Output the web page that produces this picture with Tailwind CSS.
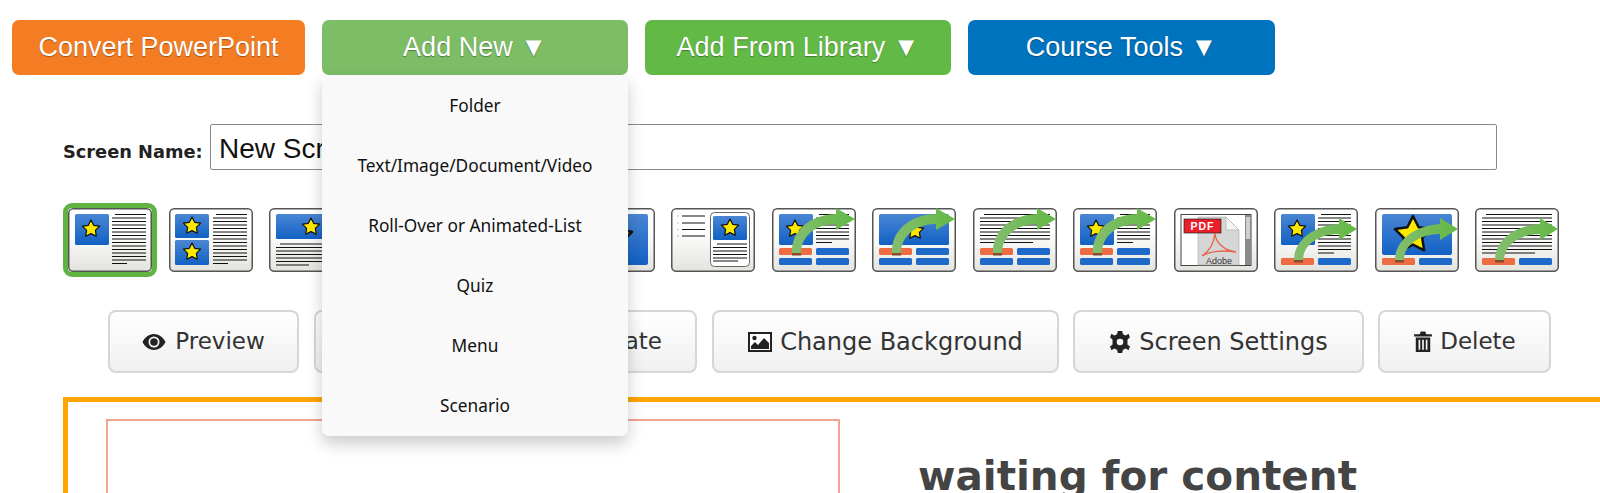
<!DOCTYPE html>
<html lang="en">
<head>
  <meta charset="UTF-8" />
  <title>Course Screen Editor</title>
  <script src="https://cdn.jsdelivr.net/npm/@tailwindcss/browser@4"></script>
</head>
<body class="relative h-[493px] w-[1600px] overflow-hidden bg-white font-['Liberation_Sans',sans-serif]">

  <!-- Shared thumbnail parts -->
  <svg class="absolute h-0 w-0" width="0" height="0">
    <defs>
      <linearGradient id="thumbBg" x1="0" y1="0" x2="0" y2="1"><stop offset="0.35" stop-color="#ffffff"/><stop offset="1" stop-color="#e3e3de"/></linearGradient>
      <linearGradient id="blueBg" x1="0" y1="0" x2="0" y2="1"><stop offset="0" stop-color="#4a86d4"/><stop offset="1" stop-color="#1161c4"/></linearGradient>
      <linearGradient id="arrowBg" x1="0" y1="0" x2="1" y2="0"><stop offset="0" stop-color="#84bd70"/><stop offset="1" stop-color="#62b944"/></linearGradient>
      <symbol id="base" viewBox="0 0 84 64"><rect x="0.75" y="0.75" width="82.5" height="62.5" rx="4.5" fill="url(#thumbBg)" stroke="#555" stroke-width="1.5"/></symbol>
      <symbol id="star" viewBox="-10 -10 20 20"><path d="M0-9 2.700-3.700 8.600-2.800 4.400 1.400 5.300 7.300 0 4.600-5.300 7.300-4.400 1.400-8.600-2.800-2.700-3.700Z" fill="#fde800" stroke="#111" stroke-width="1.200" stroke-linejoin="round"/></symbol>
      <symbol id="arrowTall" viewBox="0 0 84 64"><path d="M20 45C19 24 36 7 64 6V0L83 11 64 22V16C44 16 29 28 29 45Z" fill="url(#arrowBg)"/><path d="M20 45h9v2.500h-9z" fill="#8a4a2c"/></symbol>
      <symbol id="arrowLow" viewBox="0 0 84 64"><path d="M20 52C20 34 37 18 65 16V10L83 21 65 32V26C45 26 29 37 29 52Z" fill="url(#arrowBg)"/><path d="M20 52h9v2.500h-9z" fill="#8a4a2c"/></symbol>
      <symbol id="pillsTwoRows" viewBox="0 0 84 64"><rect x="7" y="40" width="33" height="7" rx="1.500" fill="#ee6c42"/><rect x="44" y="40" width="33" height="7" rx="1.500" fill="#1f69c9"/><rect x="7" y="50" width="33" height="7" rx="1.500" fill="#1f69c9"/><rect x="44" y="50" width="33" height="7" rx="1.500" fill="#1f69c9"/></symbol>
      <symbol id="pillsOneRow" viewBox="0 0 84 64"><rect x="7" y="50" width="33" height="7" rx="1.500" fill="#ee6c42"/><rect x="44" y="50" width="33" height="7" rx="1.500" fill="#1f69c9"/></symbol>
      <symbol id="linesRight" viewBox="0 0 84 64"><path d="M47 6.500H78M44 10H78M44 13.500H78M44 17H78M44 20.500H78M44 24H78M44 27.500H78M44 31H78M44 34.500H78M44 38H78M44 41.500H78M44 45H78M44 48.500H78M44 52H78M44 55.500H59" stroke="#111" stroke-width="1.200"/></symbol>
      <symbol id="linesRightShort" viewBox="0 0 84 64"><path d="M47 6.500H77M44 10H77M44 13.500H77M44 17H77M44 20.500H77M44 24H77M44 27.500H77M44 31H77M44 34.500H60" stroke="#111" stroke-width="1.200"/></symbol>
      <symbol id="linesRightMid" viewBox="0 0 84 64"><path d="M47 6.500H77M44 10H77M44 13.500H77M44 17H77M44 20.500H77M44 24H77M44 27.500H77M44 31H77M44 34.500H77M44 38H77M44 41.500H77M44 45H60" stroke="#111" stroke-width="1.200"/></symbol>
      <symbol id="linesWideShort" viewBox="0 0 84 64"><path d="M11 6.500H77M7 10H77M7 13.500H77M7 17H77M7 20.500H77M7 24H77M7 27.500H77M7 31H77M7 34.500H60" stroke="#111" stroke-width="1.200"/></symbol>
      <symbol id="linesWideMid" viewBox="0 0 84 64"><path d="M11 6.500H77M7 10H77M7 13.500H77M7 17H77M7 20.500H77M7 24H77M7 27.500H77M7 31H77M7 34.500H77M7 38H77M7 41.500H77M7 45H60" stroke="#111" stroke-width="1.200"/></symbol>
    </defs>
  </svg>

  <!-- Top toolbar -->
  <div class="flex gap-[17px] pl-[12px] pt-[20px]">
    <button class="h-[55px] w-[293px] rounded-[7px] bg-[#f47d24] text-[27px] text-white [text-shadow:0_1px_1px_rgba(0,0,0,.35)]">Convert PowerPoint</button>
    <div class="relative">
      <button class="h-[55px] w-[306px] rounded-[7px] bg-[#7dbd66] text-[27px] text-white [text-shadow:0_1px_1px_rgba(0,0,0,.35)]">Add New ▼</button>
      <!-- Add New dropdown -->
      <div class="absolute left-0 top-[55px] z-10 flex w-[306px] flex-col rounded-b-[7px] bg-[#f9f9f9] pt-[1px] text-center font-['Noto_Sans',sans-serif] text-[17.300px] text-[#111] shadow-[0_8px_16px_rgba(0,0,0,0.2)]">
        <a class="flex h-[60px] items-center justify-center">Folder</a>
        <a class="flex h-[60px] items-center justify-center">Text/Image/Document/Video</a>
        <a class="flex h-[60px] items-center justify-center">Roll-Over or Animated-List</a>
        <a class="flex h-[60px] items-center justify-center">Quiz</a>
        <a class="flex h-[60px] items-center justify-center">Menu</a>
        <a class="flex h-[60px] items-center justify-center">Scenario</a>
      </div>
    </div>
    <button class="h-[55px] w-[306px] rounded-[7px] bg-[#63b946] text-[27px] text-white [text-shadow:0_1px_1px_rgba(0,0,0,.35)]">Add From Library ▼</button>
    <button class="h-[55px] w-[307px] rounded-[7px] bg-[#0073bf] text-[27px] text-white [text-shadow:0_1px_1px_rgba(0,0,0,.35)]">Course Tools ▼</button>
  </div>

  <!-- Screen name -->
  <div class="mt-[49px] flex items-center pl-[63px]">
    <label class="w-[147px] pt-[11px] font-['DejaVu_Sans',sans-serif] text-[17.800px] font-bold text-[#222]">Screen Name:</label>
    <input type="text" value="New Screen" class="h-[46px] w-[1287px] rounded-[2px] border border-[#8a8a8a] px-[8px] pt-[3px] text-[28px] text-[#111]" />
  </div>

  <!-- Layout thumbnails -->
  <div class="mt-[38px] flex h-[64px] gap-[16.500px] pl-[68px]">
    <div class="relative h-[64px] w-[84px]">
      <div class="absolute -inset-x-[5px] -inset-y-[5px] rounded-[9px] border-[5px] border-[#5fb441]"></div>
      <svg width="84" height="64" viewBox="0 0 84 64"><use href="#base"/><rect x="7" y="6" width="34" height="31" rx="1.500" fill="url(#blueBg)"/><use href="#star" x="13" y="11" width="20" height="20"/><use href="#linesRight"/></svg>
    </div>
    <svg width="84" height="64" viewBox="0 0 84 64"><use href="#base"/><rect x="6" y="6" width="34" height="24" rx="1.500" fill="url(#blueBg)"/><rect x="6" y="32" width="34" height="25" rx="1.500" fill="url(#blueBg)"/><use href="#star" x="13" y="8" width="20" height="20"/><use href="#star" x="13" y="34" width="20" height="20"/><use href="#linesRight"/></svg>
    <svg width="84" height="64" viewBox="0 0 84 64"><use href="#base"/><rect x="7" y="6" width="70" height="25" rx="1.500" fill="url(#blueBg)"/><use href="#star" x="32" y="9" width="20" height="20"/><path d="M11 36H77M7 39.500H77M7 43H77M7 46.500H77M7 50H77M7 53.500H77M7 57H40" stroke="#111" stroke-width="1.200"/></svg>
    <svg width="84" height="64" viewBox="0 0 84 64"><use href="#base"/><path d="M11 6.500H77M7 10H77M7 13.500H77M7 17H77M7 20.500H77M7 24H77" stroke="#111" stroke-width="1.200"/><rect x="7" y="28" width="70" height="29" rx="1.500" fill="url(#blueBg)"/><use href="#star" x="32" y="32" width="20" height="20"/></svg>
    <svg width="84" height="64" viewBox="0 0 84 64"><use href="#base"/><use href="#linesWideMid"/><path d="M7 48.500H77M7 52H77M7 55.500H50" stroke="#111" stroke-width="1.200"/></svg>
    <svg width="84" height="64" viewBox="0 0 84 64"><use href="#base"/><rect x="7" y="6" width="70" height="51" rx="2" fill="url(#blueBg)"/><use href="#star" x="20" y="8" width="44" height="44"/></svg>
    <svg width="84" height="64" viewBox="0 0 84 64"><use href="#base"/><path d="M11 8H34M11 15H34M11 21.500H34M11 28H34" stroke="#111" stroke-width="1"/><path d="M6.500 8h1M6.500 15h1M6.500 21.500h1M6.500 28h1" stroke="#ee5a30" stroke-width="1"/><rect x="39.500" y="4.500" width="39" height="54" rx="4" fill="#fff" stroke="#666" stroke-width="1"/><rect x="42" y="8" width="34" height="24" rx="1.500" fill="url(#blueBg)"/><use href="#star" x="49" y="10" width="20" height="20"/><path d="M46 36H76M42 39.500H76M42 43H76M42 46.500H76M42 50H76M42 53H67" stroke="#111" stroke-width="1.200"/></svg>
    <svg width="84" height="64" viewBox="0 0 84 64"><use href="#base"/><rect x="7" y="6" width="34" height="31" rx="1.500" fill="url(#blueBg)"/><use href="#star" x="13" y="11" width="20" height="20"/><use href="#linesRightShort"/><use href="#pillsTwoRows"/><use href="#arrowTall"/></svg>
    <svg width="84" height="64" viewBox="0 0 84 64"><use href="#base"/><rect x="7" y="6" width="70" height="31" rx="1.500" fill="url(#blueBg)"/><use href="#star" x="33" y="13" width="20" height="20"/><use href="#pillsTwoRows"/><use href="#arrowTall"/></svg>
    <svg width="84" height="64" viewBox="0 0 84 64"><use href="#base"/><use href="#linesWideShort"/><use href="#pillsTwoRows"/><use href="#arrowTall"/></svg>
    <svg width="84" height="64" viewBox="0 0 84 64"><use href="#base"/><rect x="7" y="6" width="34" height="31" rx="1.500" fill="url(#blueBg)"/><use href="#star" x="13" y="11" width="20" height="20"/><use href="#linesRightShort"/><use href="#pillsTwoRows"/><use href="#arrowTall"/></svg>
    <!-- PDF layout -->
    <svg width="84" height="64" viewBox="0 0 84 64"><use href="#base"/><rect x="7" y="6.500" width="70" height="51" fill="#fff" stroke="#444" stroke-width="1"/><rect x="71" y="7" width="6" height="50" fill="#8a8a8a"/><rect x="72" y="9" width="4" height="22" fill="#cfcfcf"/><path d="M24 9H52L65 22V57H24Z" fill="#d6d6d6" stroke="#aaa" stroke-width=".6"/><path d="M52 9V22H65Z" fill="#f4f4f4" stroke="#aaa" stroke-width=".6"/><rect x="10" y="11" width="37" height="14" fill="#e9202a" stroke="#222" stroke-width=".7"/><text x="28.500" y="22" text-anchor="middle" font-family="Liberation Sans" font-weight="700" font-size="10.500" letter-spacing="1" fill="#fff">PDF</text><path d="M28 48C34 44 40 36 41 25 41 33 48 42 62 44 50 42 36 43 28 48Z" fill="none" stroke="#ea5f45" stroke-width="1.300"/><text x="45" y="56" text-anchor="middle" font-family="Liberation Sans" font-size="9" fill="#333">Adobe</text></svg>
    <svg width="84" height="64" viewBox="0 0 84 64"><use href="#base"/><rect x="7" y="6" width="34" height="31" rx="1.500" fill="url(#blueBg)"/><use href="#star" x="13" y="11" width="20" height="20"/><use href="#linesRightMid"/><use href="#pillsOneRow"/><use href="#arrowLow"/></svg>
    <svg width="84" height="64" viewBox="0 0 84 64"><use href="#base"/><rect x="7" y="6" width="70" height="41" rx="2" fill="url(#blueBg)"/><use href="#star" x="17" y="6" width="42" height="42"/><use href="#pillsOneRow"/><use href="#arrowLow"/></svg>
    <svg width="84" height="64" viewBox="0 0 84 64"><use href="#base"/><use href="#linesWideMid"/><use href="#pillsOneRow"/><use href="#arrowLow"/></svg>
  </div>

  <!-- Screen actions -->
  <div class="mt-[38px] flex h-[63px] pl-[108px] font-['DejaVu_Sans',sans-serif] text-[23px] text-[#333]">
    <button class="flex w-[191px] items-center justify-center gap-[9px] rounded-[8px] border-2 border-[#d6d6d6] bg-gradient-to-b from-white to-[#f0f0f0]">
      <svg width="24" height="18" viewBox="0 0 24 18"><path d="M12 1C6.500 1 2.500 5 .5 9 2.500 13 6.500 17 12 17S21.500 13 23.500 9C21.500 5 17.500 1 12 1ZM12 14.500A5.500 5.500 0 1 1 12 3.500 5.500 5.500 0 0 1 12 14.500Z" fill="#222"/><circle cx="12" cy="9" r="3.800" fill="#222"/></svg>Preview</button>
    <button class="ml-[15px] flex w-[383px] items-center justify-end rounded-[8px] border-2 border-[#d6d6d6] bg-gradient-to-b from-white to-[#f0f0f0] pr-[33px]">Save as Template</button>
    <button class="ml-[15px] flex w-[347px] items-center justify-center gap-[8px] rounded-[8px] border-2 border-[#d6d6d6] bg-gradient-to-b from-white to-[#f0f0f0] text-[24px]">
      <svg width="24" height="20" viewBox="0 0 24 20"><rect x="1" y="1" width="22" height="18" fill="#fff" stroke="#222" stroke-width="2"/><circle cx="6.500" cy="6" r="2.200" fill="#222"/><path d="M3 17V14L7 10 10 13 16 6 21 11V17Z" fill="#222"/></svg>Change Background</button>
    <button class="ml-[14px] flex w-[291px] items-center justify-center gap-[8px] rounded-[8px] border-2 border-[#d6d6d6] bg-gradient-to-b from-white to-[#f0f0f0] text-[24px]">
      <svg width="22" height="22" viewBox="0 0 20 20"><path d="M8 0H12L12.700 3 15.200 4 17.800 2.400 19 6 16.800 7.800V12.200L19 14 17.800 17.600 15.200 16 12.700 17 12 20H8L7.300 17 4.800 16 2.200 17.600 1 14 3.200 12.200V7.800L1 6 2.200 2.400 4.800 4 7.300 3ZM10 7A3 3 0 1 0 10 13 3 3 0 0 0 10 7Z" fill="#222" fill-rule="evenodd"/></svg>Screen Settings</button>
    <button class="ml-[14px] flex w-[173px] items-center justify-center gap-[7px] rounded-[8px] border-2 border-[#d6d6d6] bg-gradient-to-b from-white to-[#f0f0f0]">
      <svg width="20" height="23" viewBox="0 0 18 20"><path d="M1 3.500H6L7 1H11L12 3.500H17V5.500H1ZM2.500 6.500H15.500V19.500H2.500ZM5 8.500V17.500H6.500V8.500ZM8.250 8.500V17.500H9.750V8.500ZM11.500 8.500V17.500H13V8.500Z" fill="#222" fill-rule="evenodd"/></svg>Delete</button>
  </div>

  <!-- Screen canvas -->
  <div class="mt-[24px] ml-[63px] flex h-[96px] w-[1537px] overflow-hidden border-l-[5px] border-t-[5px] border-[#ffa500] pl-[38px] pt-[17px]">
    <div class="h-[120px] w-[734px] shrink-0 border-2 border-b-0 border-[#f2a48e]"></div>
    <h1 class="ml-[78px] shrink-0 pt-[33px] font-['DejaVu_Sans',sans-serif] text-[40.500px] font-bold leading-[48px] text-[#444]">waiting for content</h1>
  </div>

</body>
</html>
